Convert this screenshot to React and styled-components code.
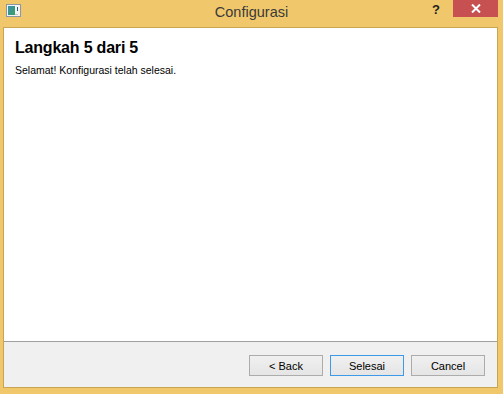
import React from "react";
import styled, { createGlobalStyle } from "styled-components";

const Global = createGlobalStyle`
  html, body { margin: 0; padding: 0; background: #efc86b; }
  body { font-family: "Liberation Sans", Arial, sans-serif; }
`;

const Window = styled.div`
  width: 503px;
  height: 394px;
  box-sizing: border-box;
  background: #f0c86b;
  display: flex;
  flex-direction: column;
`;

const TitleBar = styled.div`
  height: 27px;
  display: flex;
  align-items: flex-start;
  position: relative;
  flex-shrink: 0;
`;

const AppIcon = styled.svg`
  margin: 4px 0 0 6px;
  display: block;
`;

const Title = styled.div`
  position: absolute;
  left: 0;
  right: 0;
  top: 4px;
  text-align: center;
  font-size: 14.5px;
  color: #3a3a3a;
  pointer-events: none;
`;

const Controls = styled.div`
  margin-left: auto;
  margin-right: 5px;
  display: flex;
  align-items: flex-start;
`;

const HelpButton = styled.div`
  width: 30px;
  height: 17px;
  display: flex;
  align-items: center;
  justify-content: center;
  font-weight: bold;
  font-size: 13px;
  color: #222;
  padding-top: 1px;
  box-sizing: border-box;
  margin-right: 2px;
`;

const CloseButton = styled.div`
  width: 45px;
  height: 17px;
  background: #c75050;
  display: flex;
  align-items: center;
  justify-content: center;
`;

const Client = styled.div`
  flex: 1;
  margin: 0 5px 6px 3px;
  border: 1px solid #c9a552;
  display: flex;
  flex-direction: column;
  min-height: 0;
`;

const Content = styled.div`
  flex: 1;
  background: #ffffff;
  padding: 10px 11px;
`;

const Heading = styled.h1`
  margin: 0;
  font-size: 16px;
  font-weight: bold;
  color: #000;
  line-height: 20px;
  letter-spacing: -0.2px;
`;

const Message = styled.p`
  margin: 6px 0 0;
  font-size: 10.5px;
  color: #000;
`;

const Footer = styled.div`
  height: 46px;
  flex-shrink: 0;
  box-sizing: border-box;
  border-top: 1px solid #a0a0a0;
  background: #f0f0f0;
  display: flex;
  justify-content: flex-end;
  align-items: flex-start;
  gap: 7px;
  padding: 13px 12px 0 0;
`;

const Button = styled.button`
  width: 74px;
  height: 21px;
  box-sizing: border-box;
  border: 1px solid ${(p) => (p.$default ? "#3c9ae8" : "#acacac")};
  background: linear-gradient(#f0f0f0, #e5e5e5);
  font-family: "Liberation Sans", Arial, sans-serif;
  font-size: 11px;
  color: #000;
  padding: 0;
  margin: 0;
`;

export default function App() {
  return (
    <>
      <Global />
      <Window>
        <TitleBar>
          <AppIcon width="15" height="13" viewBox="0 0 15 13">
            <rect x="0.5" y="0.5" width="14" height="12" fill="#f4f4f4" stroke="#8a96a4" />
            <defs>
              <linearGradient id="g" x1="0" y1="0" x2="1" y2="1">
                <stop offset="0" stopColor="#3a8fb0" />
                <stop offset="1" stopColor="#3aa060" />
              </linearGradient>
            </defs>
            <rect x="2" y="2" width="7" height="9" fill="url(#g)" />
            <rect x="11" y="3" width="1" height="4" fill="#2a5a8a" />
            <rect x="9" y="10" width="3" height="1" fill="#c8c8c8" />
          </AppIcon>
          <Title>Configurasi</Title>
          <Controls>
            <HelpButton>?</HelpButton>
            <CloseButton>
              <svg width="10" height="9" viewBox="0 0 10 9">
                <path d="M1 0.5 L9 8.5 M9 0.5 L1 8.5" stroke="#fff" strokeWidth="2" />
              </svg>
            </CloseButton>
          </Controls>
        </TitleBar>
        <Client>
          <Content>
            <Heading>Langkah 5 dari 5</Heading>
            <Message>Selamat! Konfigurasi telah selesai.</Message>
          </Content>
          <Footer>
            <Button>&lt; Back</Button>
            <Button $default>Selesai</Button>
            <Button>Cancel</Button>
          </Footer>
        </Client>
      </Window>
    </>
  );
}
